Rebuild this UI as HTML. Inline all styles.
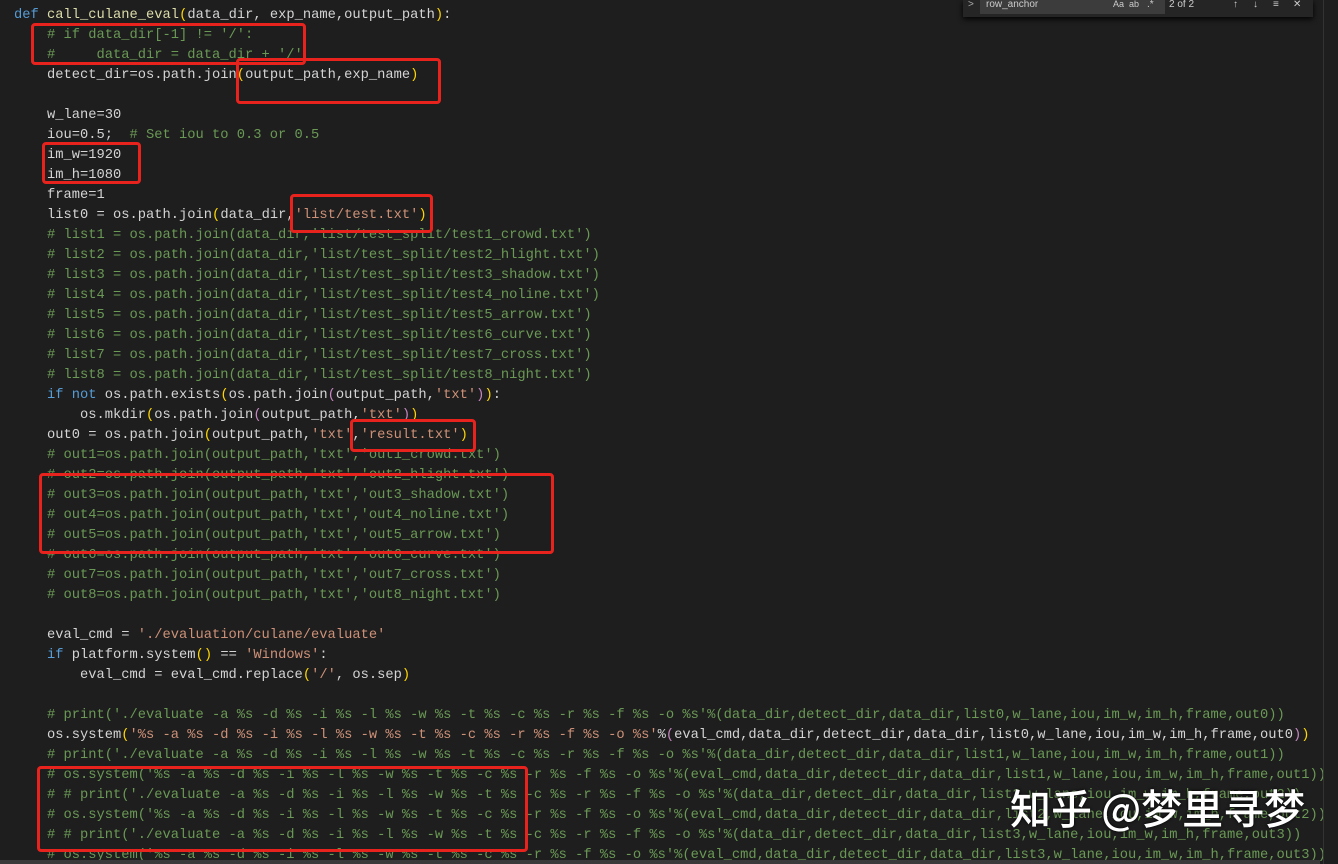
<!DOCTYPE html>
<html><head><meta charset="utf-8"><style>
html,body{margin:0;padding:0;background:#1e1e1e;width:1338px;height:864px;overflow:hidden;position:relative}
pre{position:absolute;left:14px;top:6px;margin:0;font-family:"Liberation Mono",monospace;font-size:13.75px;line-height:20px;color:#d4d4d4;white-space:pre}
.c{color:#6a9955}.s{color:#ce9178}.k{color:#569cd6}.f{color:#dcdcaa}.n{color:#b5cea8}.y{color:#ffd700}.p{color:#c586c0}
.box{position:absolute;border:3px solid #e8231e;border-radius:4px;box-sizing:border-box}
.wm{position:absolute;left:1010px;top:776px;font-family:"Noto Sans CJK SC",sans-serif;font-size:41px;color:#fff;font-weight:500;text-shadow:0 0 3px #000;white-space:nowrap}
.find{position:absolute;left:963px;top:0;width:350px;height:17px;background:#252526;box-shadow:0 2px 6px #000}
.find .in{position:absolute;left:17px;top:0;width:185px;height:14px;background:#3c3c3c}
.find span{position:absolute;top:-1px;font-family:"Liberation Sans",sans-serif;font-size:10px;color:#ccc}
</style></head><body>
<pre><span class="k">def</span> <span class="f">call_culane_eval</span><span class="y">(</span>data_dir, exp_name,output_path<span class="y">)</span>:
    <span class="c"># if data_dir[-1] != '/':</span>
    <span class="c">#     data_dir = data_dir + '/'</span>
    detect_dir=os.path.join<span class="y">(</span>output_path,exp_name<span class="y">)</span>

    w_lane=30
    iou=0.5;  <span class="c"># Set iou to 0.3 or 0.5</span>
    im_w=1920
    im_h=1080
    frame=1
    list0 = os.path.join<span class="y">(</span>data_dir,<span class="s">'list/test.txt'</span><span class="y">)</span>
    <span class="c"># list1 = os.path.join(data_dir,'list/test_split/test1_crowd.txt')</span>
    <span class="c"># list2 = os.path.join(data_dir,'list/test_split/test2_hlight.txt')</span>
    <span class="c"># list3 = os.path.join(data_dir,'list/test_split/test3_shadow.txt')</span>
    <span class="c"># list4 = os.path.join(data_dir,'list/test_split/test4_noline.txt')</span>
    <span class="c"># list5 = os.path.join(data_dir,'list/test_split/test5_arrow.txt')</span>
    <span class="c"># list6 = os.path.join(data_dir,'list/test_split/test6_curve.txt')</span>
    <span class="c"># list7 = os.path.join(data_dir,'list/test_split/test7_cross.txt')</span>
    <span class="c"># list8 = os.path.join(data_dir,'list/test_split/test8_night.txt')</span>
    <span class="k">if not</span> os.path.exists<span class="y">(</span>os.path.join<span class="p">(</span>output_path,<span class="s">'txt'</span><span class="p">)</span><span class="y">)</span>:
        os.mkdir<span class="y">(</span>os.path.join<span class="p">(</span>output_path,<span class="s">'txt'</span><span class="p">)</span><span class="y">)</span>
    out0 = os.path.join<span class="y">(</span>output_path,<span class="s">'txt'</span>,<span class="s">'result.txt'</span><span class="y">)</span>
    <span class="c"># out1=os.path.join(output_path,'txt','out1_crowd.txt')</span>
    <span class="c"># out2=os.path.join(output_path,'txt','out2_hlight.txt')</span>
    <span class="c"># out3=os.path.join(output_path,'txt','out3_shadow.txt')</span>
    <span class="c"># out4=os.path.join(output_path,'txt','out4_noline.txt')</span>
    <span class="c"># out5=os.path.join(output_path,'txt','out5_arrow.txt')</span>
    <span class="c"># out6=os.path.join(output_path,'txt','out6_curve.txt')</span>
    <span class="c"># out7=os.path.join(output_path,'txt','out7_cross.txt')</span>
    <span class="c"># out8=os.path.join(output_path,'txt','out8_night.txt')</span>

    eval_cmd = <span class="s">'./evaluation/culane/evaluate'</span>
    <span class="k">if</span> platform.system<span class="y">()</span> == <span class="s">'Windows'</span>:
        eval_cmd = eval_cmd.replace<span class="y">(</span><span class="s">'/'</span>, os.sep<span class="y">)</span>

    <span class="c"># print('./evaluate -a %s -d %s -i %s -l %s -w %s -t %s -c %s -r %s -f %s -o %s'%(data_dir,detect_dir,data_dir,list0,w_lane,iou,im_w,im_h,frame,out0))</span>
    os.system<span class="y">(</span><span class="s">'%s -a %s -d %s -i %s -l %s -w %s -t %s -c %s -r %s -f %s -o %s'</span>%<span class="p">(</span>eval_cmd,data_dir,detect_dir,data_dir,list0,w_lane,iou,im_w,im_h,frame,out0<span class="p">)</span><span class="y">)</span>
    <span class="c"># print('./evaluate -a %s -d %s -i %s -l %s -w %s -t %s -c %s -r %s -f %s -o %s'%(data_dir,detect_dir,data_dir,list1,w_lane,iou,im_w,im_h,frame,out1))</span>
    <span class="c"># os.system('%s -a %s -d %s -i %s -l %s -w %s -t %s -c %s -r %s -f %s -o %s'%(eval_cmd,data_dir,detect_dir,data_dir,list1,w_lane,iou,im_w,im_h,frame,out1))</span>
    <span class="c"># # print('./evaluate -a %s -d %s -i %s -l %s -w %s -t %s -c %s -r %s -f %s -o %s'%(data_dir,detect_dir,data_dir,list2,w_lane,iou,im_w,im_h,frame,out2))</span>
    <span class="c"># os.system('%s -a %s -d %s -i %s -l %s -w %s -t %s -c %s -r %s -f %s -o %s'%(eval_cmd,data_dir,detect_dir,data_dir,list2,w_lane,iou,im_w,im_h,frame,out2))</span>
    <span class="c"># # print('./evaluate -a %s -d %s -i %s -l %s -w %s -t %s -c %s -r %s -f %s -o %s'%(data_dir,detect_dir,data_dir,list3,w_lane,iou,im_w,im_h,frame,out3))</span>
    <span class="c"># os.system('%s -a %s -d %s -i %s -l %s -w %s -t %s -c %s -r %s -f %s -o %s'%(eval_cmd,data_dir,detect_dir,data_dir,list3,w_lane,iou,im_w,im_h,frame,out3))</span>
</pre>
<div style="position:absolute;left:1323px;top:0;width:1px;height:864px;background:#333"></div>
<div style="position:absolute;left:0;top:860px;width:1320px;height:4px;background:#3a3a3a"></div>
<div class="find"><span style="left:5px;color:#aaa">&gt;</span><div class="in"></div><span style="left:23px">row_anchor</span><span style="left:150px;font-size:9px">Aa</span><span style="left:166px;font-size:9px">ab</span><span style="left:184px">.*</span><span style="left:206px">2 of 2</span><span style="left:270px">↑</span><span style="left:290px">↓</span><span style="left:310px">≡</span><span style="left:330px">✕</span></div>
<div class="box" style="left:31px;top:23px;width:275px;height:42px"></div>
<div class="box" style="left:236px;top:58px;width:205px;height:46px"></div>
<div class="box" style="left:42px;top:142px;width:99px;height:42px"></div>
<div class="box" style="left:290px;top:194px;width:143px;height:39px"></div>
<div class="box" style="left:350px;top:419px;width:126px;height:33px"></div>
<div class="box" style="left:39px;top:473px;width:515px;height:81px"></div>
<div class="box" style="left:37px;top:766px;width:491px;height:86px"></div>
<div class="wm">知乎 @梦里寻梦</div>
</body></html>
